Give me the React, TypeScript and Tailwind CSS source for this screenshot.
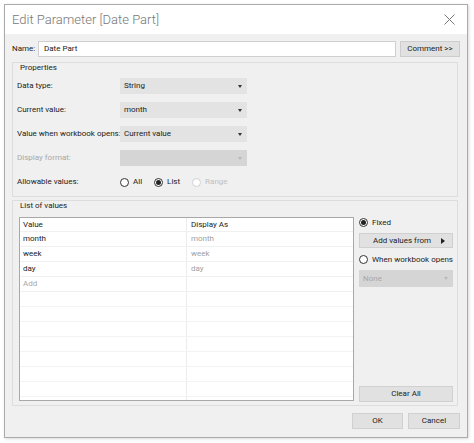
import React from 'react';

const Caret = ({ disabled }: { disabled?: boolean }) => (
  <svg width="4" height="3" viewBox="0 0 4 3" className="shrink-0">
    <path d="M0 0 H4 L2 3 Z" fill={disabled ? '#b8b8b8' : '#333'} />
  </svg>
);

const Dropdown = ({ value, disabled, className = '' }: { value: string; disabled?: boolean; className?: string }) => (
  <div
    className={`h-[16px] flex items-center justify-between pl-[4px] pr-[5px] ${
      disabled ? 'bg-[#d5d5d5] text-[#a8a8a8]' : 'bg-[#e3e3e3] text-[#222]'
    } ${className}`}
  >
    <span>{value}</span>
    <Caret disabled={disabled} />
  </div>
);

const Radio = ({ checked, disabled, label }: { checked?: boolean; disabled?: boolean; label: string }) => (
  <div className={`flex items-center gap-[4px] ${disabled ? 'text-[#c0c0c0]' : 'text-[#222]'}`}>
    <span
      className={`w-[9px] h-[9px] rounded-full border bg-white flex items-center justify-center shrink-0 ${
        disabled ? 'border-[#d0d0d0]' : 'border-[#333]'
      }`}
    >
      {checked && <span className="w-[5px] h-[5px] rounded-full bg-[#222]" />}
    </span>
    <span>{label}</span>
  </div>
);

const PropRow = ({ label, children, disabled }: { label: string; children: React.ReactNode; disabled?: boolean }) => (
  <div className="flex items-center h-[16px]">
    <span className={`w-[103px] ${disabled ? 'text-[#a8a8a8]' : 'text-[#222]'}`}>{label}</span>
    {children}
  </div>
);

const rows = [
  { value: 'month', display: 'month' },
  { value: 'week', display: 'week' },
  { value: 'day', display: 'day' },
];

export default function App() {
  return (
    <div className="w-[474px] h-[443px] bg-white text-[8px] leading-none whitespace-nowrap font-['Roboto',sans-serif]">
      <div className="absolute left-[4px] top-[4px] w-[464px] h-[434px] border border-[#ababab] shadow-[1px_1px_3px_rgba(0,0,0,0.15)] flex flex-col bg-[#f0f0f0]">
        {/* title bar */}
        <div className="h-[29px] bg-white flex items-center justify-between pl-[7px] pr-[12px] shrink-0">
          <span className="text-[13px] font-light text-[#777]">Edit Parameter [Date Part]</span>
          <svg width="11" height="11" viewBox="0 0 11 11">
            <path d="M0.5 0.5 L10.5 10.5 M10.5 0.5 L0.5 10.5" stroke="#777" strokeWidth="1" />
          </svg>
        </div>

        <div className="flex-1 flex flex-col pl-[7px] pr-[7px]">
          {/* name row */}
          <div className="flex items-center mt-[7px] h-[16px]">
            <span className="w-[26px] text-[#222]">Name:</span>
            <div className="w-[358px] h-[16px] bg-white border border-[#cfcfcf] flex items-center pl-[5px] text-[#222]">
              Date Part
            </div>
            <div className="ml-[4px] w-[60px] h-[16px] bg-[#e1e1e1] border border-[#cdcdcd] flex items-center justify-center text-[#222]">
              Comment &gt;&gt;
            </div>
          </div>

          {/* properties group */}
          <div className="mt-[5px] w-[446px] h-[135px] border border-[#dddddd] pl-[4px]">
            <div className="pl-[3px] h-[9px] flex items-center text-[#222]">Properties</div>
            <div className="flex flex-col gap-[8px] mt-[6px]">
              <PropRow label="Data type:">
                <Dropdown value="String" className="w-[127px]" />
              </PropRow>
              <PropRow label="Current value:">
                <Dropdown value="month" className="w-[127px]" />
              </PropRow>
              <PropRow label="Value when workbook opens:">
                <Dropdown value="Current value" className="w-[127px]" />
              </PropRow>
              <PropRow label="Display format:" disabled>
                <Dropdown value="" disabled className="w-[127px]" />
              </PropRow>
              <PropRow label="Allowable values:">
                <div className="flex items-center gap-[12px]">
                  <Radio label="All" />
                  <Radio label="List" checked />
                  <Radio label="Range" disabled />
                </div>
              </PropRow>
            </div>
          </div>

          {/* list of values group */}
          <div className="mt-[3px] w-[446px] h-[206px] border border-[#dddddd] pl-[6px]">
            <div className="pl-[1px] h-[9px] flex items-center text-[#222]">List of values</div>
            <div className="flex mt-[7px]">
              <div className="w-[335px] h-[184px] bg-white border border-[#a8a8a8] overflow-hidden">
                <div className="flex h-[14px] items-center border-b border-[#f0f0f0] text-[#222]">
                  <span className="w-[167px] pl-[3px] h-full flex items-center border-r border-[#ececec]">Value</span>
                  <span className="pl-[4px]">Display As</span>
                </div>
                {rows.map((r) => (
                  <div key={r.value} className="flex h-[15px] items-center border-b border-[#f0f0f0]">
                    <span className="w-[167px] pl-[3px] h-full flex items-center border-r border-[#ececec] text-[#222]">
                      {r.value}
                    </span>
                    <span className="pl-[4px] text-[#a0a0a0]">{r.display}</span>
                  </div>
                ))}
                <div className="flex h-[15px] items-center border-b border-[#f0f0f0]">
                  <span className="w-[167px] pl-[3px] h-full flex items-center border-r border-[#ececec] text-[#a8a8a8]">
                    Add
                  </span>
                </div>
                {Array.from({ length: 8 }).map((_, i) => (
                  <div key={i} className="flex h-[15px] border-b border-[#f3f3f3]">
                    <span className="w-[167px] h-full border-r border-[#ececec]" />
                  </div>
                ))}
              </div>

              <div className="ml-[5px] w-[94px] flex flex-col">
                <div className="mt-[1px]">
                  <Radio label="Fixed" checked />
                </div>
                <div className="mt-[6px] h-[15px] bg-[#e1e1e1] border border-[#d0d0d0] flex items-center justify-between pl-[13px] pr-[7px] text-[#222]">
                  <span>Add values from</span>
                  <svg width="4" height="6" viewBox="0 0 4 6">
                    <path d="M0 0 L4 3 L0 6 Z" fill="#222" />
                  </svg>
                </div>
                <div className="mt-[7px]">
                  <Radio label="When workbook opens" />
                </div>
                <Dropdown value="None" disabled className="mt-[6px] h-[17px]" />
                <div className="mt-auto mb-[-1px] h-[16px] bg-[#e1e1e1] border border-[#d0d0d0] flex items-center justify-center text-[#222]">
                  Clear All
                </div>
              </div>
            </div>
          </div>

          {/* footer buttons */}
          <div className="flex justify-end mt-[7px] gap-[5px]">
            <div className="w-[51px] h-[16px] bg-[#e1e1e1] border border-[#d0d0d0] flex items-center justify-center text-[#222]">
              OK
            </div>
            <div className="w-[52px] h-[16px] bg-[#e1e1e1] border border-[#d0d0d0] flex items-center justify-center text-[#222]">
              Cancel
            </div>
          </div>
        </div>
      </div>
    </div>
  );
}
